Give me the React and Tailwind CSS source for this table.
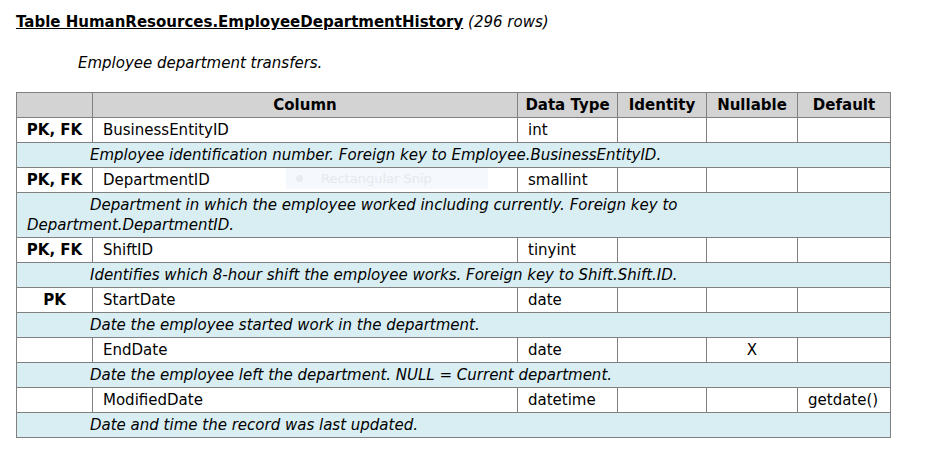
export default function App() {
  const rows = [
    { key: "PK, FK", name: "BusinessEntityID", type: "int", nullable: "", def: "", desc: "Employee identification number. Foreign key to Employee.BusinessEntityID." },
    { key: "PK, FK", name: "DepartmentID", type: "smallint", nullable: "", def: "", desc: "Department in which the employee worked including currently. Foreign key to Department.DepartmentID." },
    { key: "PK, FK", name: "ShiftID", type: "tinyint", nullable: "", def: "", desc: "Identifies which 8-hour shift the employee works. Foreign key to Shift.Shift.ID." },
    { key: "PK", name: "StartDate", type: "date", nullable: "", def: "", desc: "Date the employee started work in the department." },
    { key: "", name: "EndDate", type: "date", nullable: "X", def: "", desc: "Date the employee left the department. NULL = Current department." },
    { key: "", name: "ModifiedDate", type: "datetime", nullable: "", def: "getdate()", desc: "Date and time the record was last updated." },
  ];
  const td = "border border-[#808080] px-[10px] py-[2px] leading-[20px] align-middle";
  const th = "border border-[#808080] px-[2px] py-[2px] leading-[20px] font-bold text-center whitespace-nowrap";
  return (
    <div className="w-[932px] h-[454px] bg-white text-black relative" style={{ fontFamily: '"DejaVu Sans", Verdana, sans-serif' }}>
      <div className="pt-[11px] pl-[16px] text-[15px] leading-[22px]">
        <span className="font-bold underline">Table HumanResources.EmployeeDepartmentHistory</span>{" "}
        <span className="italic">(296 rows)</span>
      </div>
      <div className="pl-[78px] pt-[19px] text-[15px] italic leading-[22px]">Employee department transfers.</div>
      <div className="pl-[16px] pt-[18px]">
        <table className="border-collapse border border-[#808080] text-[15px] w-[874px] table-fixed">
          <colgroup>
            <col className="w-[76px]" />
            <col className="w-[425px]" />
            <col className="w-[100px]" />
            <col className="w-[89px]" />
            <col className="w-[91px]" />
            <col className="w-[93px]" />
          </colgroup>
          <thead>
            <tr className="bg-[#d3d3d3]">
              <th className={th}></th>
              <th className={th}>Column</th>
              <th className={th}>Data Type</th>
              <th className={th}>Identity</th>
              <th className={th}>Nullable</th>
              <th className={th}>Default</th>
            </tr>
          </thead>
          <tbody>
            {rows.map((r) => (
              <>
                <tr key={r.name} className="bg-white">
                  <td className={td + " font-bold text-center !px-[4px]"}>{r.key}</td>
                  <td className={td}>{r.name}</td>
                  <td className={td}>{r.type}</td>
                  <td className={td}></td>
                  <td className={td + " text-center"}>{r.nullable}</td>
                  <td className={td}>{r.def}</td>
                </tr>
                <tr key={r.name + "-d"} className="bg-[#d9eef3]">
                  <td colSpan={6} className={td + " italic indent-[63px]"}>{r.desc}</td>
                </tr>
              </>
            ))}
          </tbody>
        </table>
      </div>
      <div className="absolute left-[286px] top-[168px] w-[202px] h-[21px] bg-[#f5f8fc] flex items-center pl-[10px] gap-[18px] text-[13px] text-[#e6e9ee]">
        <span className="w-[7px] h-[7px] rounded-full bg-[#e8ebf0]"></span>
        <span>Rectangular Snip</span>
      </div>
    </div>
  );
}
